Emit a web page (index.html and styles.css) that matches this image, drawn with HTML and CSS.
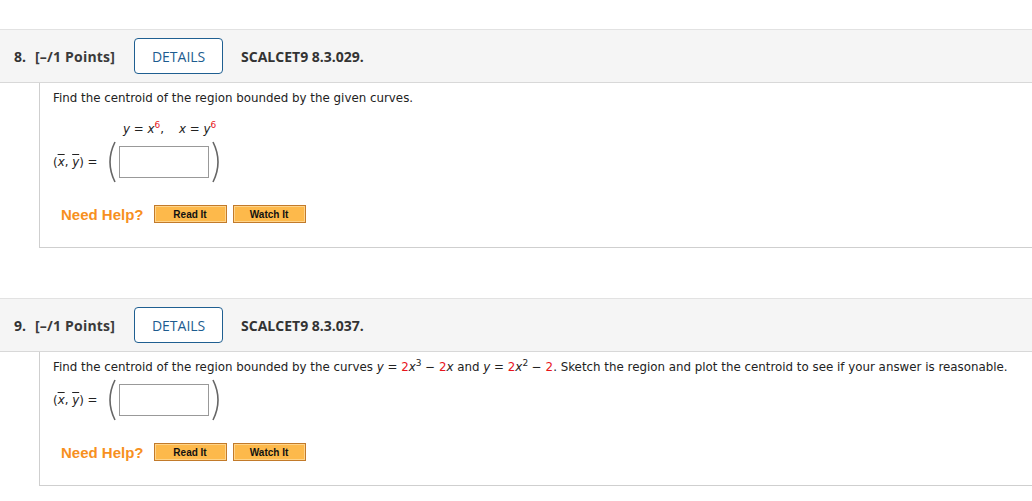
FILE: index.html
```html
<!DOCTYPE html>
<html lang="en">
<head>
  <meta charset="UTF-8">
  <title>Questions</title>
  <link rel="stylesheet" href="styles.css">
</head>
<body>
  <div class="question">
    <div class="q-head">
      <span class="q-num">8.</span>
      <span class="q-points">[&ndash;/1 Points]</span>
      <button class="details">DETAILS</button>
      <span class="q-ref">SCALCET9 8.3.029.</span>
    </div>
    <div class="q-body">
      <p class="prompt">Find the centroid of the region bounded by the given curves.</p>
      <p class="eq"><i>y</i> = <i>x</i><sup class="red">6</sup>, &nbsp;&nbsp; <i>x</i> = <i>y</i><sup class="red">6</sup></p>
      <div class="answer">
        <span class="pair">(<i class="bar">x</i>, <i class="bar">y</i>) =</span>
        <svg class="paren" width="12" height="42" viewBox="0 0 12 42"><path d="M10 1 Q0 21 10 41" fill="none" stroke="#666" stroke-width="1.6"/></svg>
        <input class="box" type="text">
        <svg class="paren" width="12" height="42" viewBox="0 0 12 42"><path d="M2 1 Q12 21 2 41" fill="none" stroke="#666" stroke-width="1.6"/></svg>
      </div>
      <div class="help">
        <span class="need">Need Help?</span>
        <button class="help-btn">Read It</button>
        <button class="help-btn">Watch It</button>
      </div>
    </div>
  </div>

  <div class="question">
    <div class="q-head">
      <span class="q-num">9.</span>
      <span class="q-points">[&ndash;/1 Points]</span>
      <button class="details">DETAILS</button>
      <span class="q-ref">SCALCET9 8.3.037.</span>
    </div>
    <div class="q-body">
      <p class="prompt">Find the centroid of the region bounded by the curves <i>y</i> = <span class="red">2</span><i>x</i><sup>3</sup> &minus; <span class="red">2</span><i>x</i> and <i>y</i> = <span class="red">2</span><i>x</i><sup>2</sup> &minus; <span class="red">2</span>. Sketch the region and plot the centroid to see if your answer is reasonable.</p>
      <div class="answer">
        <span class="pair">(<i class="bar">x</i>, <i class="bar">y</i>) =</span>
        <svg class="paren" width="12" height="42" viewBox="0 0 12 42"><path d="M10 1 Q0 21 10 41" fill="none" stroke="#666" stroke-width="1.6"/></svg>
        <input class="box" type="text">
        <svg class="paren" width="12" height="42" viewBox="0 0 12 42"><path d="M2 1 Q12 21 2 41" fill="none" stroke="#666" stroke-width="1.6"/></svg>
      </div>
      <div class="help">
        <span class="need">Need Help?</span>
        <button class="help-btn">Read It</button>
        <button class="help-btn">Watch It</button>
      </div>
    </div>
  </div>
</body>
</html>
```

FILE: styles.css
```css
body {
  margin: 0;
  padding-top: 29px;
  background: #fff;
  font-family: 'DejaVu Sans', Verdana, sans-serif;
  color: #222;
}

.question {
  margin-bottom: 50px;
}

.question:last-child {
  margin-bottom: 0;
}

.q-head {
  display: flex;
  align-items: center;
  height: 52px;
  background: #f5f5f5;
  border-top: 1px solid #e2e2e2;
  border-bottom: 1px solid #d8d8d8;
  font-family: 'Open Sans', sans-serif;
  font-size: 14px;
  font-weight: bold;
  color: #333;
}

.q-num {
  margin-left: 14px;
  width: 21px;
}

.q-points {
  color: #3a3a3a;
  letter-spacing: 0.2px;
}

.details {
  margin-left: 19px;
  width: 89px;
  height: 36px;
  border: 1px solid #1f5f91;
  border-radius: 4px;
  background: #fff;
  font-family: 'Open Sans', sans-serif;
  font-size: 14px;
  color: #1d5c8f;
  padding: 0;
}

.q-ref {
  margin-left: 18px;
}

.q-body {
  margin-left: 39px;
  border-left: 1px solid #cfcfcf;
  border-bottom: 1px solid #cfcfcf;
  padding: 7px 0 24px 13px;
  font-size: 11.85px;
}

.prompt {
  margin: 0;
  line-height: 16px;
}

.eq {
  margin: 15px 0 0 70px;
  line-height: 16px;
}

sup {
  font-size: 9px;
  line-height: 0;
  vertical-align: baseline;
  position: relative;
  top: -0.6em;
}

.red {
  color: #e8141b;
}

.answer {
  display: flex;
  align-items: center;
  margin-top: 5px;
  height: 40px;
}

.pair {
  margin-right: 7px;
}

.bar {
  text-decoration: overline;
}

.box {
  width: 90px;
  height: 32px;
  box-sizing: border-box;
  border: 1px solid #999;
  margin: 0 2px;
}

.help {
  display: flex;
  align-items: center;
  margin: 23px 0 0 8px;
}

.need {
  font-family: 'Liberation Sans', Arial, sans-serif;
  font-weight: bold;
  font-size: 15px;
  color: #f7901e;
  margin-right: 10px;
}

.help-btn {
  width: 73px;
  height: 18px;
  margin-right: 6px;
  padding: 0;
  background: #fdb94b;
  border: 1px solid #c27a2a;
  box-shadow: inset 0 0 0 1px #fed48a;
  font-family: 'Liberation Sans', Arial, sans-serif;
  font-size: 10px;
  font-weight: bold;
  color: #111;
}
```
